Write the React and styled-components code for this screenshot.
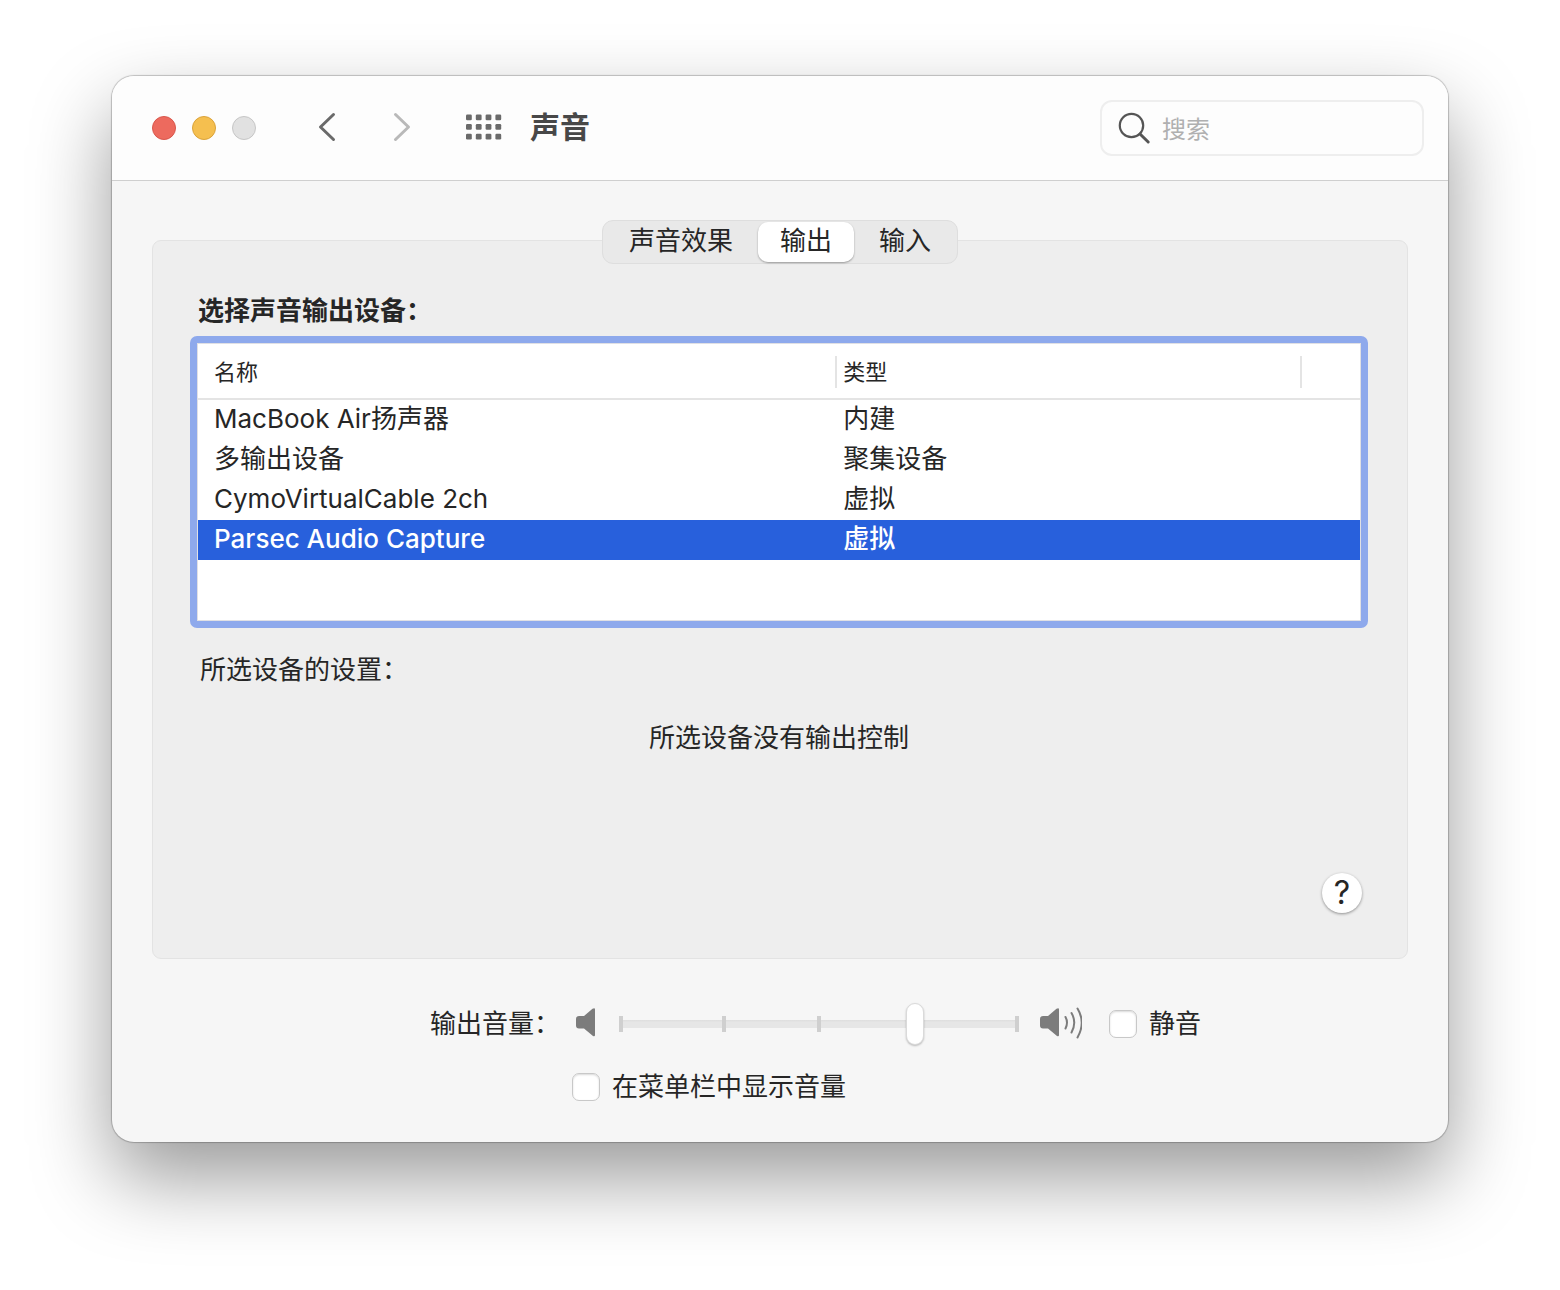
import { useState } from "react";
import styled, { createGlobalStyle } from "styled-components";

const GlobalStyle = createGlobalStyle`
    * {
        box-sizing: border-box;
    }
    body {
        margin: 0;
        background-color: #ffffff;
        color: #262626;
        font-family: Inter, "Noto Sans CJK SC", sans-serif;
        font-size: 26px;
        line-height: 40px;
    }
    button, input {
        font-family: inherit;
        font-size: inherit;
        line-height: inherit;
        color: inherit;
    }
`;

const Desktop = styled.div`
    min-height: 100vh;
    padding: 76px 112px 148px;
    overflow: hidden;
    display: flex;
    flex-direction: column;
`;
const Window = styled.main`
    flex: 1;
    display: flex;
    flex-direction: column;
    border-radius: 22px;
    background-color: #f6f6f6;
    box-shadow: 0 0 1px 1px rgba(0, 0, 0, 0.22), 0 36px 80px rgba(0, 0, 0, 0.4);
`;

const Toolbar = styled.header`
    height: 105px;
    padding: 0 24px 0 40px;
    display: flex;
    align-items: center;
    border-bottom: 1px solid #cfcfcf;
    border-radius: 22px 22px 0 0;
    background-color: #fdfdfd;
`;
const Lights = styled.div`
    display: flex;
    gap: 16px;
`;
const Light = styled.button`
    width: 24px;
    height: 24px;
    padding: 0;
    border: 1px solid ${props => props.$edge};
    border-radius: 50%;
    background-color: ${props => props.$fill};
`;
const Navigation = styled.nav`
    margin-left: 60px;
    display: flex;
    align-items: center;
    gap: 53px;
`;
const IconButton = styled.button`
    padding: 0;
    border: 0;
    background: none;
    display: flex;
    color: ${props => (props.disabled ? "#b9b9b9" : "#6a6a6a")};
`;
const Title = styled.h1`
    margin: 0 auto 0 28px;
    padding-bottom: 2px;
    font-size: 30px;
    font-weight: 700;
    color: #484848;
`;
const SearchBox = styled.label`
    width: 324px;
    height: 56px;
    padding: 0 16px;
    display: flex;
    align-items: center;
    gap: 10px;
    border: 2px solid #eeeeee;
    border-radius: 12px;
    color: #555555;
`;
const SearchInput = styled.input`
    flex: 1;
    min-width: 0;
    padding: 4px 0 0;
    border: 0;
    outline: 0;
    background: none;
    font-size: 24px;
    &::placeholder {
        color: #b0b0b0;
    }
`;

const Content = styled.div`
    flex: 1;
    padding: 39px 40px 35px;
    display: flex;
    flex-direction: column;
`;
const Tabs = styled.div`
    position: relative;
    align-self: center;
    margin-bottom: -24px;
    padding: 1px;
    display: flex;
    border: 1px solid #dedede;
    border-radius: 11px;
    background-color: #e9e9e9;
`;
const Tab = styled.button`
    height: 40px;
    padding: 0 ${props => (props.$active ? "22px" : "25px")} 2px;
    border: 0;
    border-radius: 10px;
    line-height: 38px;
    background-color: ${props => (props.$active ? "#ffffff" : "transparent")};
    box-shadow: ${props => (props.$active ? "0 1px 2px rgba(0, 0, 0, 0.35)" : "none")};
`;
const Panel = styled.section`
    flex: 1;
    padding: 50px 39px 45px 37px;
    display: flex;
    flex-direction: column;
    border: 1px solid #e3e3e3;
    border-radius: 9px;
    background-color: #eeeeee;
`;
const Heading = styled.h2`
    margin: 0 8px 5px;
    font-size: 26px;
    font-weight: 700;
`;
const SubHeading = styled.h3`
    margin: 0 10px 5px;
    font-size: 26px;
    font-weight: 400;
`;
const DeviceList = styled.div`
    height: 292px;
    margin-bottom: 22px;
    border: 7px solid #8ea9ec;
    border-radius: 7px;
    background-color: #ffffff;
`;
const DeviceFrame = styled.div`
    height: 100%;
    border: 1px solid #e0e0e4;
`;
const DeviceTable = styled.table`
    width: 100%;
    table-layout: fixed;
    border-collapse: separate;
    border-spacing: 0;
    text-align: left;
`;
const HeaderCell = styled.th`
    width: ${props => props.$width};
    height: 56px;
    padding: 2px 0 0 ${props => (props.$first ? "16px" : "6px")};
    border-bottom: 2px solid #e4e4e4;
    font-size: 22px;
    font-weight: 400;
`;
const HeaderLabel = styled.div`
    height: 32px;
    line-height: 32px;
    border-right: 2px solid #e4e4e4;
`;
const DeviceRow = styled.tr`
    background-color: ${props => (props.$selected ? "#2860dc" : "transparent")};
    color: ${props => (props.$selected ? "#ffffff" : "#262626")};
    font-weight: ${props => (props.$selected ? 500 : 400)};
`;
const DeviceCell = styled.td`
    height: 40px;
    padding: 0 0 2px ${props => (props.$first ? "16px" : "6px")};
    line-height: 38px;
`;
const Message = styled.p`
    margin: 23px 0 0;
    text-align: center;
`;
const HelpButton = styled.button`
    width: 40px;
    height: 40px;
    margin: auto 6px 0 auto;
    padding: 0;
    border: 0;
    border-radius: 50%;
    background-color: #ffffff;
    box-shadow: 0 1px 3px rgba(0, 0, 0, 0.4);
    font-size: 32px;
`;

const Footer = styled.footer`
    margin-top: 44px;
    display: grid;
    grid-template-columns: 408px 1fr;
    gap: 22px 12px;
`;
const VolumeLabel = styled.label`
    text-align: right;
    line-height: 42px;
`;
const VolumeRow = styled.div`
    display: flex;
    align-items: center;
    color: #7c7c7c;
`;
const VolumeSlider = styled.input`
    appearance: none;
    width: 400px;
    height: 42px;
    margin: 0 17px 0 23px;
    background:
        linear-gradient(#cfcfcf, #cfcfcf) 0% 50% / 4px 16px no-repeat,
        linear-gradient(#cfcfcf, #cfcfcf) 26% 50% / 4px 16px no-repeat,
        linear-gradient(#cfcfcf, #cfcfcf) 50% 50% / 4px 16px no-repeat,
        linear-gradient(#cfcfcf, #cfcfcf) 100% 50% / 4px 16px no-repeat,
        linear-gradient(#dedede, #e6e6e6 30%, #e6e6e6) 50% 50% / 100% 8px no-repeat;
    &::-webkit-slider-thumb {
        appearance: none;
        width: 18px;
        height: 42px;
        border: 1px solid #dadada;
        border-radius: 9px;
        background-color: #ffffff;
        box-shadow: 0 1px 2px rgba(0, 0, 0, 0.25);
    }
`;
const CheckLabel = styled.label`
    margin-left: ${props => props.$indent || "0"};
    display: flex;
    align-items: center;
    gap: 12px;
    color: #262626;
`;
const CheckBox = styled.input`
    appearance: none;
    width: 28px;
    height: 28px;
    margin: 0;
    border: 1px solid #c8c8c8;
    border-radius: 7px;
    background-color: ${props => (props.checked ? "#2860dc" : "#ffffff")};
    box-shadow: inset 0 1px 2px rgba(0, 0, 0, 0.15);
`;

const tabs = ["声音效果", "输出", "输入"];

const devices = [
    { name: "MacBook Air扬声器", type: "内建" },
    { name: "多输出设备", type: "聚集设备" },
    { name: "CymoVirtualCable 2ch", type: "虚拟" },
    { name: "Parsec Audio Capture", type: "虚拟" },
];

const Chevron = ({ points }) => (
    <svg width="22" height="32" viewBox="0 0 22 32" fill="none" stroke="currentColor" strokeWidth="3" strokeLinecap="round" strokeLinejoin="round">
        <polyline points={points} />
    </svg>
);

const GridIcon = () => (
    <svg width="36" height="28" viewBox="0 0 36 28" fill="currentColor">
        {[0.5, 10, 19.7].map((y) =>
            [0, 9.8, 19.6, 29.4].map((x) => (
                <rect key={x + "-" + y} x={x} y={y} width="5.8" height="5.8" rx="1.2" />
            ))
        )}
    </svg>
);

const SearchIcon = () => (
    <svg width="34" height="34" viewBox="0 0 34 34" fill="none" stroke="currentColor" strokeLinecap="round">
        <circle cx="13.5" cy="14.5" r="11.7" strokeWidth="2.2" />
        <path d="M22 23L30.2 31" strokeWidth="3" />
    </svg>
);

const Speaker = ({ waves }) => (
    <svg width={waves ? 46 : 24} height="34" viewBox={waves ? "0 0 46 34" : "0 0 24 34"} fill="none" stroke="currentColor" strokeWidth="2" strokeLinecap="round">
        <path d="M7 9H12L20.5 1.800Q23 0.500 23 2.500V28Q23 30 21 29L12 21.500H7Q4 21.500 4 18.500V12Q4 9 7 9Z" fill="currentColor" stroke="none" />
        {waves && <path d="M29.500 10Q32.500 15.500 29.500 21.500M35.500 6Q41 15.500 35.500 25.500M41.500 1.500Q50 15.500 41.500 30.500" />}
    </svg>
);

const App = () => {
    const [tab, setTab] = useState("输出");
    const [selected, setSelected] = useState(3);
    const [volume, setVolume] = useState(75);
    const [muted, setMuted] = useState(false);
    const [showInMenu, setShowInMenu] = useState(false);

    return (
        <Desktop>
            <GlobalStyle />
            <Window>
                <Toolbar>
                    <Lights>
                        <Light aria-label="关闭" $fill="#ed6a5e" $edge="#d9574c" />
                        <Light aria-label="最小化" $fill="#f5bf4f" $edge="#dba33a" />
                        <Light aria-label="缩放" disabled $fill="#e1e1e1" $edge="#c6c6c6" />
                    </Lights>
                    <Navigation>
                        <IconButton aria-label="后退">
                            <Chevron points="17.5,2.500 4.500,15 17.5,27.500" />
                        </IconButton>
                        <IconButton aria-label="前进" disabled>
                            <Chevron points="4.500,2.500 17.5,15 4.500,27.500" />
                        </IconButton>
                        <IconButton aria-label="显示全部">
                            <GridIcon />
                        </IconButton>
                    </Navigation>
                    <Title>声音</Title>
                    <SearchBox>
                        <SearchIcon />
                        <SearchInput type="search" placeholder="搜索" aria-label="搜索" />
                    </SearchBox>
                </Toolbar>
                <Content>
                    <Tabs role="tablist">
                        {tabs.map((t) => (
                            <Tab key={t} role="tab" aria-selected={t === tab} $active={t === tab} onClick={() => setTab(t)}>
                                {t}
                            </Tab>
                        ))}
                    </Tabs>
                    <Panel>
                        <Heading>选择声音输出设备：</Heading>
                        <DeviceList>
                            <DeviceFrame>
                                <DeviceTable>
                                    <thead>
                                        <tr>
                                            <HeaderCell $first>
                                                <HeaderLabel>名称</HeaderLabel>
                                            </HeaderCell>
                                            <HeaderCell $width="40%">
                                                <HeaderLabel>类型</HeaderLabel>
                                            </HeaderCell>
                                            <HeaderCell $width="58px" />
                                        </tr>
                                    </thead>
                                    <tbody>
                                        {devices.map((d, i) => (
                                            <DeviceRow key={d.name} $selected={i === selected} onClick={() => setSelected(i)}>
                                                <DeviceCell $first>{d.name}</DeviceCell>
                                                <DeviceCell>{d.type}</DeviceCell>
                                                <DeviceCell />
                                            </DeviceRow>
                                        ))}
                                    </tbody>
                                </DeviceTable>
                            </DeviceFrame>
                        </DeviceList>
                        <SubHeading>所选设备的设置：</SubHeading>
                        <Message>所选设备没有输出控制</Message>
                        <HelpButton aria-label="帮助">?</HelpButton>
                    </Panel>
                    <Footer>
                        <VolumeLabel htmlFor="volume">输出音量：</VolumeLabel>
                        <VolumeRow>
                            <Speaker />
                            <VolumeSlider id="volume" type="range" min="0" max="100" value={volume} onChange={(e) => setVolume(Number(e.target.value))} />
                            <Speaker waves />
                            <CheckLabel $indent="27px">
                                <CheckBox type="checkbox" checked={muted} onChange={() => setMuted(!muted)} />
                                静音
                            </CheckLabel>
                        </VolumeRow>
                        <div />
                        <CheckLabel>
                            <CheckBox type="checkbox" checked={showInMenu} onChange={() => setShowInMenu(!showInMenu)} />
                            在菜单栏中显示音量
                        </CheckLabel>
                    </Footer>
                </Content>
            </Window>
        </Desktop>
    );
};

export default App
